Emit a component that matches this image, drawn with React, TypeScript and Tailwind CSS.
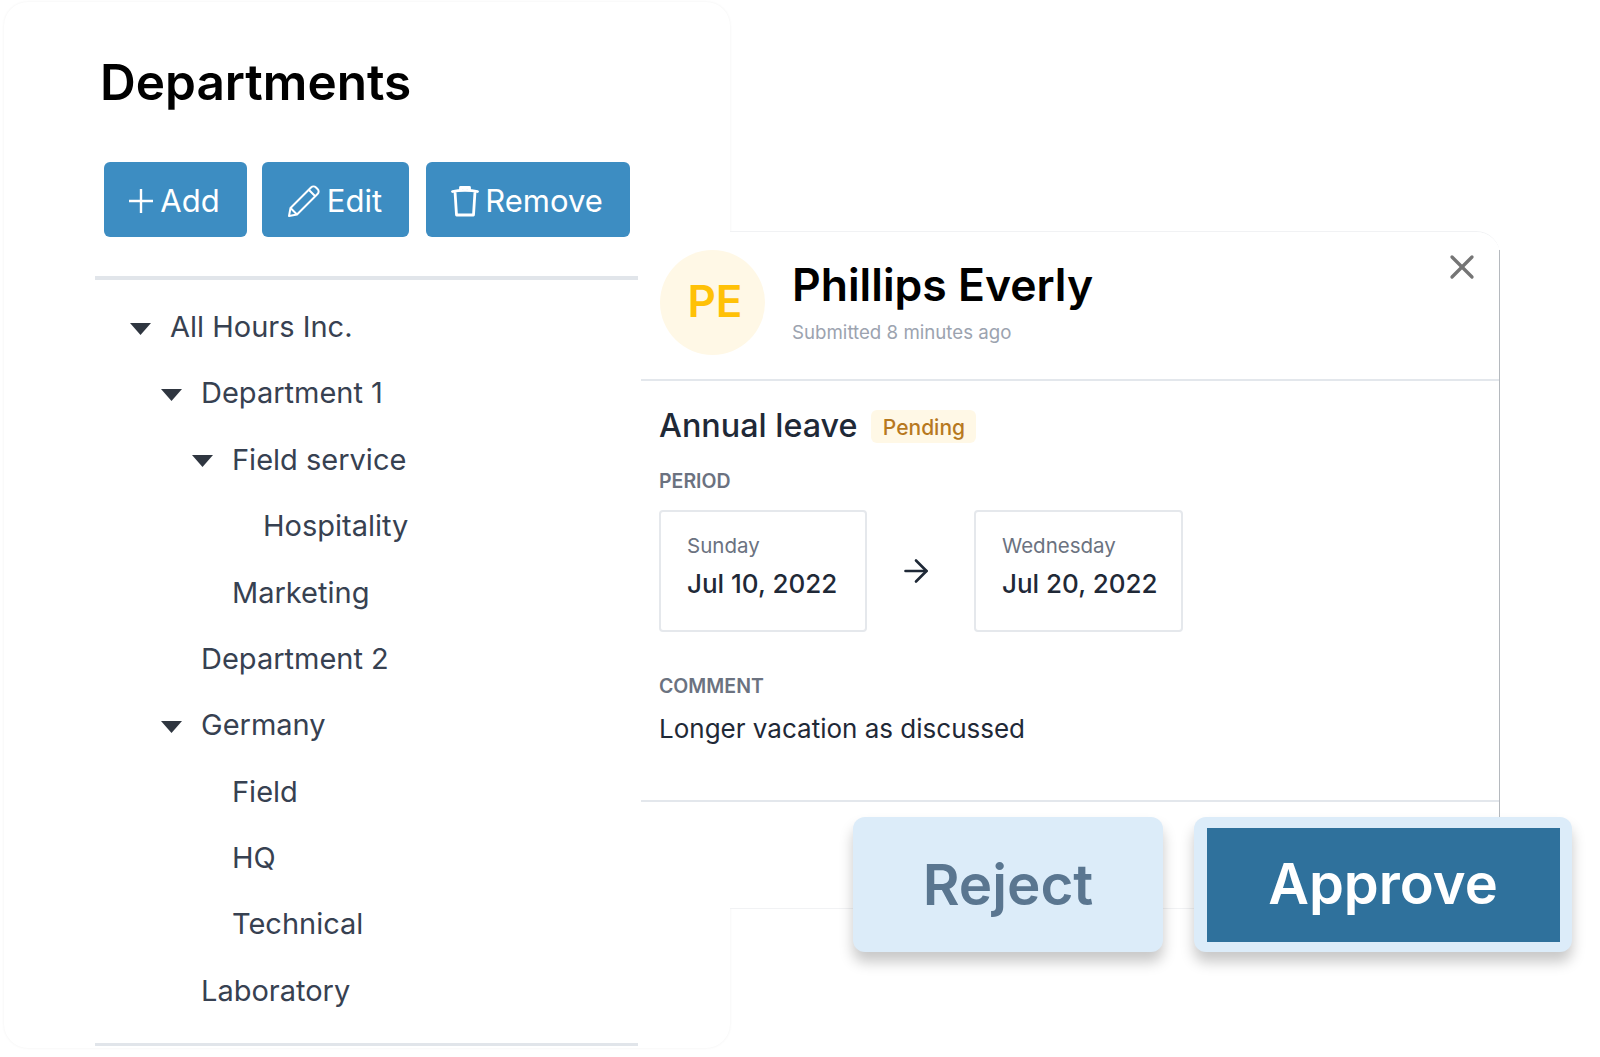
import { ReactNode } from 'react'
import { ArrowRight, X } from 'lucide-react'

const treeRows = [
  { label: 'All Hours Inc.', indent: 'pl-[130px]', open: true },
  { label: 'Department 1', indent: 'pl-[161px]', open: true },
  { label: 'Field service', indent: 'pl-[192px]', open: true },
  { label: 'Hospitality', indent: 'pl-[223px]', open: false },
  { label: 'Marketing', indent: 'pl-[192px]', open: false },
  { label: 'Department 2', indent: 'pl-[161px]', open: false },
  { label: 'Germany', indent: 'pl-[161px]', open: true },
  { label: 'Field', indent: 'pl-[192px]', open: false },
  { label: 'HQ', indent: 'pl-[192px]', open: false },
  { label: 'Technical', indent: 'pl-[192px]', open: false },
  { label: 'Laboratory', indent: 'pl-[161px]', open: false },
]

function PlusIcon() {
  return (
    <svg viewBox="0 0 26 26" className="-ml-[3px] h-[26px] w-[26px]" fill="none" stroke="currentColor" strokeWidth="2.4">
      <path d="M1 13h24M13 1v24" />
    </svg>
  )
}

function PencilIcon() {
  return (
    <svg viewBox="0 0 34 34" className="-ml-[2px] h-[34px] w-[34px]" fill="none" stroke="currentColor" strokeWidth="2" strokeLinejoin="round">
      <path d="M2 32l1.5-8L24 3.5c1.5-1.5 3.5-1.5 5 0l1.5 1.5c1.500 1.500 1.500 3.500 0 5L10 30.500z" />
      <path d="M3.500 24l6.500 6.500M22 6l6.500 6.500" />
    </svg>
  )
}

function TrashIcon() {
  return (
    <svg viewBox="0 0 28 32" className="-ml-[2px] h-[32px] w-[28px]" fill="none" stroke="currentColor" strokeWidth="2.800" strokeLinejoin="round" strokeLinecap="round">
      <path d="M1.500 6.500C8 5 20 5 26.500 6.500M9.500 5.500V2.500h9v3M4 6.500l1.500 23.500h17L24 6.500" />
    </svg>
  )
}

function ToolbarButton({ width, children }: { width: string; children: ReactNode }) {
  return (
    <button className={`flex h-[75px] items-center justify-center gap-[6px] rounded-[6px] bg-[#3d8dc2] pt-[3px] text-[31px] text-white ${width}`}>
      {children}
    </button>
  )
}

function DateCard({ day, date, width }: { day: string; date: string; width: string }) {
  return (
    <div className={`h-[122px] rounded-[4px] border-2 border-[#e5e8ec] pl-[26px] pt-[19px] ${width}`}>
      <div className="text-[20.500px] leading-[30px] text-[#6b7280]">{day}</div>
      <div className="mt-[4px] text-[26px] font-medium leading-[38px] text-[#1f2937]">{date}</div>
    </div>
  )
}

export default function App() {
  return (
    <div className="relative h-[1057px] w-[1600px] overflow-hidden bg-white font-['Inter',sans-serif]">
      {/* Departments card */}
      <div className="ml-[4px] mt-[2px] h-[1046px] w-[726px] rounded-[24px] bg-white shadow-[0_0_3px_rgba(0,0,0,0.06)]">
        <h1 className="pl-[96px] pt-[48px] text-[49.500px] font-semibold leading-[64px] text-black">Departments</h1>
        <div className="ml-[100px] mt-[48px] flex gap-[15px]">
          <ToolbarButton width="w-[143px]">
            <PlusIcon />
            Add
          </ToolbarButton>
          <ToolbarButton width="w-[147px]">
            <PencilIcon />
            Edit
          </ToolbarButton>
          <div className="-ml-[13px] w-0" />
          <ToolbarButton width="w-[204px]">
            <TrashIcon />
            Remove
          </ToolbarButton>
        </div>
        <div className="ml-[91px] mt-[39px] h-[4px] w-[543px] bg-[#e1e5ea]" />
        <div className="pt-[13.500px]">
          {treeRows.map(row => (
            <div key={row.label} className={`-ml-[4px] flex h-[66.400px] items-center text-[29px] text-[#374151] ${row.indent}`}>
              {row.open && (
                <svg viewBox="0 0 21 12" className="mr-[19px] mt-[4px] h-[12px] w-[21px]">
                  <path d="M0 0h21L10.500 12z" fill="#2f3640" />
                </svg>
              )}
              {!row.open && <span className="w-[40px]" />}
              {row.label}
            </div>
          ))}
        </div>
        <div className="ml-[91px] mt-[19.500px] h-[3px] w-[543px] bg-[#e1e5ea]" />
      </div>

      {/* faint outline of the panel where it leaves the card */}
      <div className="absolute left-[730px] top-[231px] h-[40px] w-[770px] rounded-tr-[24px] border-t border-[#f1f2f4]" />

      {/* Request details panel */}
      <div className="absolute left-[641px] top-[232px] h-[676px] w-[859px] rounded-tr-[24px] bg-white">
        <div className="flex h-[149px] border-b-2 border-[#e3e7ec] pl-[19px] pt-[18px]">
          <div className="flex h-[105px] w-[105px] items-center justify-center rounded-full bg-[#fff8e6] pb-[3px] pl-[5px] text-[44px] font-semibold text-[#ffc107]">
            PE
          </div>
          <div className="ml-[27px]">
            <div className="pt-[6px] text-[44.500px] font-semibold leading-[58px] text-black">Phillips Everly</div>
            <div className="mt-[5px] text-[18.700px] leading-[28px] text-[#9ca3af]">Submitted 8 minutes ago</div>
          </div>
          <X className="absolute right-[18px] top-[15px] h-[40px] w-[40px] text-[#757575]" strokeWidth={2} />
        </div>
        <div className="h-[421px] border-b-2 border-[#e3e7ec] pl-[18px]">
          <div className="flex items-center pt-[28px]">
            <span className="text-[32.300px] font-medium leading-[34px] text-[#1f2937]">Annual leave</span>
            <span className="ml-[14px] flex h-[33px] w-[105px] items-center justify-center rounded-[6px] bg-[#fff8e6] pt-[3px] text-[21px] font-medium text-[#b7791f]">
              Pending
            </span>
          </div>
          <div className="mt-[25px] text-[19.500px] font-semibold leading-[26px] text-[#6b7280]">PERIOD</div>
          <div className="mt-[16px] flex items-center">
            <DateCard day="Sunday" date="Jul 10, 2022" width="w-[208px]" />
            <ArrowRight className="ml-[31px] mr-[40px] h-[36px] w-[36px] text-[#1f2937]" strokeWidth={1.750} />
            <DateCard day="Wednesday" date="Jul 20, 2022" width="w-[209px]" />
          </div>
          <div className="mt-[41px] text-[19.500px] font-semibold leading-[26px] text-[#6b7280]">COMMENT</div>
          <div className="mt-[11px] text-[26px] leading-[38px] text-[#1f2937]">Longer vacation as discussed</div>
        </div>
      </div>
      <div className="absolute left-[1499px] top-[250px] h-[570px] w-px bg-[#b5b9be]" />
      <div className="absolute left-[730px] top-[908px] h-px w-[470px] bg-[#f1f2f4]" />

      {/* Action buttons */}
      <div className="absolute left-[853px] top-[817px] flex gap-[31px]">
        <button className="flex h-[135px] w-[310px] items-center justify-center rounded-[12px] bg-[#dcecf9] pt-[2px] text-[56.500px] font-semibold text-[#5a7690] shadow-[0_10px_14px_rgba(0,0,0,0.22)]">
          Reject
        </button>
        <div className="flex h-[135px] w-[378px] items-center justify-center rounded-[12px] bg-[#dcecf9] shadow-[0_10px_14px_rgba(0,0,0,0.22)]">
          <button className="h-[114px] w-[353px] bg-[#2f719c] pb-[2px] text-[56px] font-semibold text-white">Approve</button>
        </div>
      </div>
    </div>
  )
}
